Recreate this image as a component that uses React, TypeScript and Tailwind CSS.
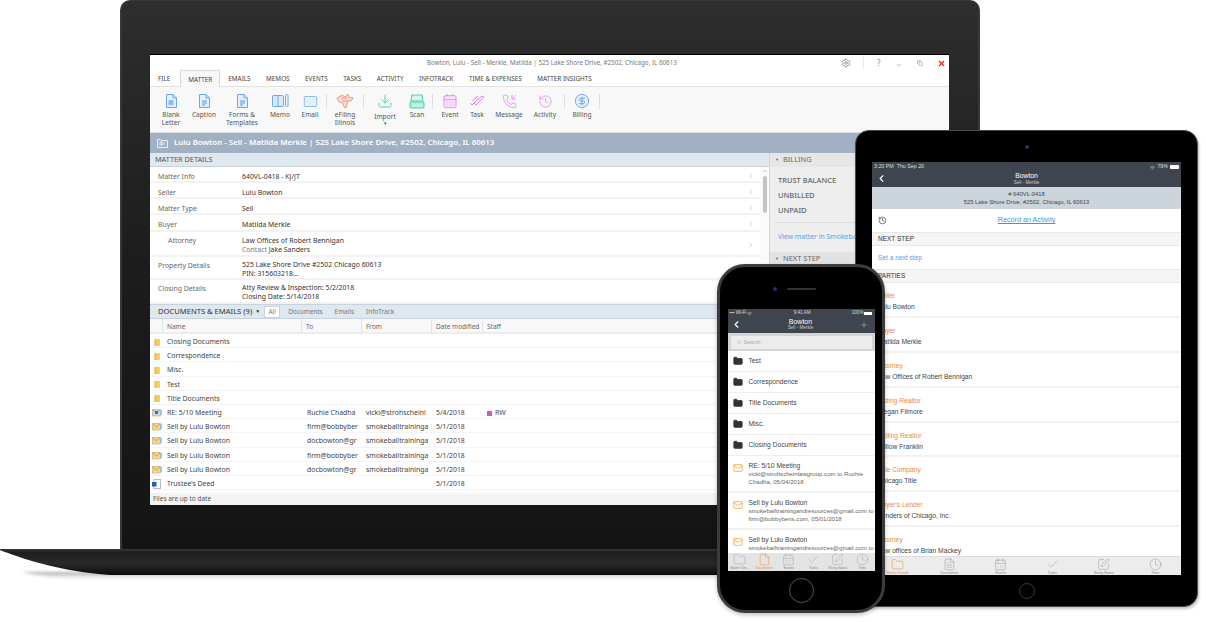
import {
  CalendarDays,
  Check,
  ChevronLeft,
  ChevronRight,
  ChevronUp,
  CircleDollarSign,
  Clock,
  Copy,
  Download,
  File,
  FileText,
  Folder,
  History,
  Mail,
  Minus,
  PhoneIncoming,
  Plus,
  Search,
  Settings,
  SquarePen,
  Wifi,
  X,
} from 'lucide-react'

const win = "font-['Noto_Sans',sans-serif]"
const ios = "font-['Liberation_Sans',sans-serif]"

const tabs = ['FILE', 'MATTER', 'EMAILS', 'MEMOS', 'EVENTS', 'TASKS', 'ACTIVITY', 'INFOTRACK', 'TIME & EXPENSES', 'MATTER INSIGHTS']

function DocIcon({ lines = 2 }: { lines?: number }) {
  return (
    <svg width="15" height="16" viewBox="0 0 15 16" fill="none" stroke="#6aa9e9" strokeWidth="1">
      <path d="M2.5 1.5h6.5l3.5 3.5v9.5h-10z" fill="#e4f0fc" />
      <path d="M9 1.5v3.5h3.5" />
      {lines > 1 && <path d="M5 8h5M5 10h5M5 12h3" stroke="#5b9ae0" />}
      {lines === 1 && <rect x="4.5" y="7" width="5" height="5" fill="#8dbdf0" stroke="none" />}
    </svg>
  )
}

function MemoIcon() {
  return (
    <svg width="17" height="14" viewBox="0 0 17 14" fill="none" stroke="#6aa9e9" strokeWidth="1">
      <rect x="0.5" y="1.5" width="11" height="11" rx="1" fill="#d9e9fa" />
      <path d="M6 2v10" />
      <rect x="13.5" y="0.5" width="2.5" height="12" rx="1" />
    </svg>
  )
}

function IllinoisIcon() {
  return (
    <svg width="18" height="16" viewBox="0 0 18 16" fill="#fbdcd3" stroke="#ee9a85" strokeWidth="1">
      <path d="M1 5l5-3 3 2 3-3 1 3 4 1-2 3-3 0-1 3-1 4-2-1-1-4-4-1z" />
      <path d="M5 5h7M6 8h6" fill="none" />
    </svg>
  )
}

function ScanIcon() {
  return (
    <svg width="16" height="15" viewBox="0 0 16 15" fill="none" stroke="#4fd0b2" strokeWidth="1.1">
      <path d="M3 1h10l1 6H2z" fill="#d8f6ee" />
      <rect x="1" y="8" width="14" height="6" rx="1.5" fill="#bdf0e2" />
    </svg>
  )
}

function TaskIcon() {
  return (
    <svg width="16" height="12" viewBox="0 0 16 12" fill="none" stroke="#d884e8" strokeWidth="1">
      <path d="M1 8l2 2 3-3M5 8l2 2 8-8-2-1-7 6M3 6l6-5" />
    </svg>
  )
}

function RibbonIcon({ name }: { name: string }) {
  const pink = '#d884e8'
  switch (name) {
    case 'Blank':
      return <DocIcon lines={1} />
    case 'Caption':
    case 'Forms':
      return <DocIcon />
    case 'Memo':
      return <MemoIcon />
    case 'Email':
      return <Mail size={15} color="#6aa9e9" fill="#e4f0fc" strokeWidth={1.2} />
    case 'eFiling':
      return <IllinoisIcon />
    case 'Import':
      return <Download size={16} color="#4fd0b2" strokeWidth={1.4} />
    case 'Scan':
      return <ScanIcon />
    case 'Event':
      return <CalendarDays size={16} color={pink} fill="#f6e2fa" strokeWidth={1.2} />
    case 'Task':
      return <TaskIcon />
    case 'Message':
      return <PhoneIncoming size={15} color={pink} strokeWidth={1.2} />
    case 'Activity':
      return <History size={15} color={pink} strokeWidth={1.2} />
    default:
      return <CircleDollarSign size={16} color="#5b9ae0" fill="#e4f0fc" strokeWidth={1.2} />
  }
}

const ribbon = [
  { id: 'Blank', w: 'w-[32px]', label: ['Blank', 'Letter'] },
  { id: 'Caption', w: 'w-[34px]', label: ['Caption'] },
  { id: 'Forms', w: 'w-[42px]', label: ['Forms &', 'Templates'] },
  { id: 'Memo', w: 'w-[34px]', label: ['Memo'] },
  { id: 'Email', w: 'w-[26px]', label: ['Email'] },
  { id: 'sep', w: 'ml-[3px]', label: [] },
  { id: 'eFiling', w: 'w-[36px]', label: ['eFiling', 'Illinois'] },
  { id: 'sep', w: '', label: [] },
  { id: 'Import', w: 'w-[42px]', label: ['Import'] },
  { id: 'Scan', w: 'w-[22px]', label: ['Scan'] },
  { id: 'sep', w: 'ml-[4px]', label: [] },
  { id: 'Event', w: 'w-[34px]', label: ['Event'] },
  { id: 'Task', w: 'w-[20px]', label: ['Task'] },
  { id: 'Message', w: 'w-[44px]', label: ['Message'] },
  { id: 'Activity', w: 'w-[28px]', label: ['Activity'] },
  { id: 'sep', w: 'ml-[5px]', label: [] },
  { id: 'Billing', w: 'w-[34px]', label: ['Billing'] },
  { id: 'sep', w: '', label: [] },
]

const details = [
  { k: 'Matter Info', v: ['640VL-0418 - KJ/JT'], h: 'h-[16px] pt-[4.5px]', arrow: true },
  { k: 'Seller', v: ['Lulu Bowton'], h: 'h-[16px] pt-[4.5px]', arrow: true },
  { k: 'Matter Type', v: ['Sell'], h: 'h-[16px] pt-[4.5px]', arrow: true },
  { k: 'Buyer', v: ['Matilda Merkle'], h: 'h-[17px] pt-[4.5px]', arrow: true },
  { k: 'Attorney', v: ['Law Offices of Robert Bennigan', 'Contact Jake Sanders'], h: 'h-[25px] pt-[3.5px]', arrow: true, sub: true },
  { k: 'Property Details', v: ['525 Lake Shore Drive #2502 Chicago 60613', 'PIN: 315603218...'], h: 'h-[23px] pt-[2.5px]', low: true },
  { k: 'Closing Details', v: ['Atty Review & Inspection: 5/2/2018', 'Closing Date: 5/14/2018'], h: 'h-[24px] pt-[2.5px]', low: true },
]

type Kind = 'folder' | 'reply' | 'mail' | 'word'

const docs: { icon: Kind; name: string; to?: string; from?: string; date?: string; staff?: string }[] = [
  { icon: 'folder', name: 'Closing Documents' },
  { icon: 'folder', name: 'Correspondence' },
  { icon: 'folder', name: 'Misc.' },
  { icon: 'folder', name: 'Test' },
  { icon: 'folder', name: 'Title Documents' },
  { icon: 'reply', name: 'RE: 5/10 Meeting', to: 'Ruchie Chadha', from: 'vicki@strohscheinl', date: '5/4/2018', staff: 'RW' },
  { icon: 'mail', name: 'Sell by Lulu Bowton', to: 'firm@bobbyber', from: 'smokeballtraininga', date: '5/1/2018' },
  { icon: 'mail', name: 'Sell by Lulu Bowton', to: 'docbowton@gr', from: 'smokeballtraininga', date: '5/1/2018' },
  { icon: 'mail', name: 'Sell by Lulu Bowton', to: 'firm@bobbyber', from: 'smokeballtraininga', date: '5/1/2018' },
  { icon: 'mail', name: 'Sell by Lulu Bowton', to: 'docbowton@gr', from: 'smokeballtraininga', date: '5/1/2018' },
  { icon: 'word', name: "Trustee's Deed", date: '5/1/2018' },
]

function DocRowIcon({ kind }: { kind: Kind }) {
  if (kind === 'folder') {
    return (
      <svg width="6" height="7" viewBox="0 0 6 7">
        <rect width="6" height="7" fill="#f7cf6b" />
        <rect x="1.5" width="1" height="7" fill="#e9b648" />
      </svg>
    )
  }
  if (kind === 'word') {
    return (
      <svg width="9" height="10" viewBox="0 0 9 10">
        <rect x="2" y="0.5" width="6.5" height="9" fill="#fff" stroke="#b5bcc6" />
        <rect x="0" y="3" width="4.5" height="4.5" fill="#1f5fb0" />
      </svg>
    )
  }
  return (
    <svg width="10" height="8" viewBox="0 0 10 8">
      <rect x="0.5" y="0.5" width="8" height="6.5" fill={kind === 'reply' ? '#c9d8ea' : '#f5d48c'} stroke="#c8a45c" strokeWidth="0.6" />
      <path d="M1 1l3.5 3L8 1" fill="none" stroke="#a8843e" strokeWidth="0.6" />
      <rect x="8" y="1" width="2" height="5" fill="#9cc0e8" />
      {kind === 'reply' && <rect x="3" y="2" width="3" height="3" fill="#3e6fb4" />}
    </svg>
  )
}

function LaptopScreen() {
  return (
    <div className={`${win} flex h-[451px] w-[799px] flex-col overflow-hidden border-t border-black bg-white text-[#444]`}>
      <div className="flex h-[15px] shrink-0 items-center pl-[277px] text-[6.25px] text-[#777]">
        <span className="w-[491px] whitespace-nowrap">
          Bowton, Lulu - Sell - Merkle, Matilda | 525 Lake Shore Drive, #2502, Chicago, IL 60613
        </span>
      </div>

      <div className="flex h-[17px] shrink-0 items-end border-b border-[#e2e2e2] pl-[8px] text-[6.35px] text-[#3f3f3f]">
        {tabs.map((t) =>
          t === 'MATTER' ? (
            <span key={t} className="-mb-px mr-[8px] flex h-[17px] w-[40px] items-center justify-center border border-b-0 border-[#d8d8d8] bg-[#f8f8f8] pt-[1px]">
              {t}
            </span>
          ) : (
            <span key={t} className={`${t === 'FILE' ? 'mr-[10px]' : 'mr-[15.5px]'} flex h-[16px] items-center whitespace-nowrap pt-[1px]`}>
              {t}
            </span>
          ),
        )}
      </div>

      <div className="flex h-[45px] shrink-0 items-start bg-[#f8f8f8] pl-[5px] pt-[6px] text-[6.6px] leading-[7.5px] text-[#555]">
        {ribbon.map((r, i) =>
          r.id === 'sep' ? (
            <div key={i} className={`${r.w} mt-[1px] h-[15px] w-px bg-[#dedede]`} />
          ) : (
            <div key={i} className={`${r.w} flex shrink-0 flex-col items-center whitespace-nowrap text-center`}>
              <div className="flex h-[16px] items-center">
                <RibbonIcon name={r.id} />
              </div>
              <div className={r.id === 'Import' ? 'mt-[4px]' : 'mt-[2px]'}>
                {r.label.map((l) => (
                  <div key={l}>{l}</div>
                ))}
                {r.id === 'Import' && <div className="text-[5px] leading-[5px]">▾</div>}
              </div>
            </div>
          ),
        )}
      </div>

      <div className="flex h-[21px] shrink-0 items-center gap-[5px] border-t border-[#dcdcdc] bg-[#a0b1c3] pl-[7px] text-[7.9px] font-semibold text-white">
        <svg width="12" height="10" viewBox="0 0 12 10" fill="none" stroke="#fff" strokeWidth="0.8">
          <path d="M0.5 1.5h3l1 1h6v7h-10z" />
          <rect x="3" y="4" width="2" height="3" />
          <path d="M7 4v3" />
        </svg>
        <span className="whitespace-nowrap">Lulu Bowton - Sell - Matilda Merkle | 525 Lake Shore Drive, #2502, Chicago, IL 60613</span>
      </div>

      <div className="flex h-[151px] shrink-0">
        <div className="flex w-[619px] flex-col">
          <div className="flex h-[14px] shrink-0 items-center border-b border-[#c9d3de] bg-[#dfe7ef] pl-[5px] text-[7.3px] text-[#555]">MATTER DETAILS</div>
          <div className="flex min-h-0 flex-1">
            <div className="flex w-[610px] flex-col text-[6.9px] leading-[9px]">
              {details.map((d) => (
                <div key={d.k} className={`${d.h} flex items-start border-b-2 border-[#f3f3f3] pr-[5px]`}>
                  <div className={`${d.sub ? 'pl-[18px]' : 'pl-[8px]'} ${d.low ? 'mt-[1px]' : ''} w-[92px] shrink-0 text-[#666]`}>{d.k}</div>
                  <div className="flex-1 whitespace-nowrap text-[#333]">
                    {d.v.map((l) =>
                      l.startsWith('Contact') ? (
                        <div key={l}>
                          <span className="text-[#777]">Contact</span> Jake Sanders
                        </div>
                      ) : (
                        <div key={l}>{l}</div>
                      ),
                    )}
                  </div>
                  {d.arrow && <ChevronRight size={8} color="#999" strokeWidth={1.2} className={d.sub ? 'mt-[5px]' : ''} />}
                </div>
              ))}
            </div>
            <div className="flex w-[9px] flex-col items-center bg-[#fafafa] pt-[1px]">
              <ChevronUp size={6} color="#999" />
              <div className="mt-[2px] h-[37px] w-[4px] rounded-full bg-[#c4c4c4]" />
            </div>
          </div>
        </div>

        <div className="flex flex-1 flex-col border-l border-[#d5d5d5] bg-[#eeeeee] text-[#666]">
          <div className="flex h-[14px] shrink-0 items-center gap-[4px] bg-[#e6e6e6] pl-[5px] text-[7.4px]">
            <span className="text-[4px]">▼</span> BILLING
          </div>
          <div className="flex flex-col gap-[6px] px-[8px] pt-[9px] text-[7.5px] font-medium leading-[9px]">
            <div>TRUST BALANCE</div>
            <div>UNBILLED</div>
            <div>UNPAID</div>
          </div>
          <div className="ml-[4px] mt-[7px] h-px bg-[#dcdcdc]" />
          <div className="pl-[8px] pt-[9px] text-[6.9px] leading-[9px] whitespace-nowrap text-[#5f9fe6]">View matter in Smokeball</div>
          <div className="mt-[11px] flex h-[13px] items-center gap-[4px] bg-[#e2e2e2] pl-[5px] text-[7.5px]">
            <span className="text-[4px]">▼</span> NEXT STEP
          </div>
        </div>
      </div>

      <div className="flex h-[15px] shrink-0 items-center border-y border-[#c9d3de] bg-[#dfe7ef] pl-[8px] pt-[1px] text-[6.4px] text-[#777]">
        <span className="text-[7.6px] text-[#333]">DOCUMENTS &amp; EMAILS (9)</span>
        <span className="ml-[3px] text-[5px] text-[#333]">▼</span>
        <span className="ml-[4px] flex h-[12px] w-[16px] items-center justify-center border border-[#c9d3de] bg-white">All</span>
        <span className="ml-[8px]">Documents</span>
        <span className="ml-[12px]">Emails</span>
        <span className="ml-[12px]">InfoTrack</span>
      </div>

      <div className="grid h-[15px] shrink-0 grid-cols-[13px_139px_60px_70px_51px_1fr] border-b-2 border-[#ededed] text-[6.5px] leading-[15px] text-[#666]">
        {['', 'Name', 'To', 'From', 'Date modified', 'Staff'].map((c) => (
          <div key={c || 'icon'} className="overflow-hidden border-r border-[#e2e2e2] bg-[#f8f8f8] pl-[4px] whitespace-nowrap">
            {c}
          </div>
        ))}
      </div>

      <div className="flex min-h-0 flex-1 flex-col text-[6.9px] text-[#444]">
        {docs.map((d, i) => (
          <div key={i} className="grid h-[14.2px] shrink-0 grid-cols-[13px_139px_60px_70px_51px_1fr] items-center border-b border-[#f4f4f4] pt-[3px]">
            <div className="flex justify-center">
              <DocRowIcon kind={d.icon} />
            </div>
            <div className="pl-[4px]">{d.name}</div>
            <div className="whitespace-nowrap pl-[5px]">{d.to}</div>
            <div className="whitespace-nowrap pl-[4px]">{d.from}</div>
            <div className="pl-[4px]">{d.date}</div>
            <div className="flex items-center gap-[3px] pl-[4px]">
              {d.staff && <span className="h-[5px] w-[5px] bg-[#c85fb5]" />}
              {d.staff}
            </div>
          </div>
        ))}
      </div>
      <div className="flex h-[12px] shrink-0 items-center bg-[#f3f3f3] pl-[3px] text-[6.5px] text-[#555]">Files are up to date</div>
    </div>
  )
}

function WindowButtons() {
  return (
    <div className="absolute right-[3px] top-[3px] flex items-center">
      <Settings size={10} color="#888" />
      <div className="ml-[12px] h-[12px] w-px bg-[#e8e8e8]" />
      <span className="ml-[13px] text-[8px] leading-none text-[#888]">?</span>
      <Minus size={6} color="#888" className="ml-[15px] mt-[3px]" />
      <Copy size={6} color="#888" className="ml-[15px]" />
      <X size={9} color="#e02020" strokeWidth={3} className="ml-[14.5px]" />
    </div>
  )
}

const parties = [
  ['Seller', 'Lulu Bowton'],
  ['Buyer', 'Matilda Merkle'],
  ['Attorney', 'Law Offices of Robert Bennigan'],
  ['Listing Realtor', 'Megan Filmore'],
  ['Selling Realtor', 'Willow Franklin'],
  ['Title Company', 'Chicago Title'],
  ["Buyer's Lender", 'Lenders of Chicago, Inc.'],
  ['Attorney', 'Law offices of Brian Mackey'],
]

function Tablet() {
  const tabItems = [
    { l: 'Matter Details', I: Folder, on: true },
    { l: 'Documents', I: FileText },
    { l: 'Events', I: CalendarDays },
    { l: 'Tasks', I: Check },
    { l: 'Sticky Notes', I: SquarePen },
    { l: 'Time', I: Clock },
  ]
  return (
    <div className="absolute left-[855px] top-[130px] flex h-[477px] w-[343px] flex-col items-center rounded-[14px] border border-[#4a4a4a] bg-black shadow-[1px_2px_3px_rgba(0,0,0,0.25)]">
      <div className="flex h-[31px] shrink-0 items-center justify-center">
        <span className="h-[4px] w-[4px] rounded-full bg-[#27355c]" />
      </div>
      <div className={`${ios} flex h-[413px] w-[309px] shrink-0 flex-col overflow-hidden bg-white text-[#333]`}>
        <div className="flex h-[25px] shrink-0 flex-col bg-[#3e454e] text-white">
          <div className="flex h-[8px] items-center justify-between px-[2px] pt-[2px] text-[5.3px] text-[#ddd]">
            <span>3:20 PM&nbsp;&nbsp;Thu Sep 20</span>
            <span className="flex items-center gap-[2px]">
              <Wifi size={5} /> 79%
              <span className="h-[4px] w-[9px] rounded-[1px] bg-white" />
            </span>
          </div>
          <div className="flex flex-1 items-center">
            <ChevronLeft size={11} strokeWidth={2.5} className="ml-[4px]" />
            <div className="-ml-[15px] flex-1 pt-[1px] text-center leading-none">
              <div className="text-[6.8px]">Bowton</div>
              <div className="mt-px text-[4.6px] text-[#ccc]">Sell - Merkle</div>
            </div>
          </div>
        </div>
        <div className="flex h-[22px] shrink-0 flex-col items-center justify-center bg-[#ccd4dc] text-[5.8px] leading-[8px] text-[#444]">
          <div># 640VL-0418</div>
          <div>525 Lake Shore Drive, #2502, Chicago, IL 60613</div>
        </div>
        <div className="flex h-[23px] shrink-0 items-center pl-[6px]">
          <History size={9} color="#555" />
          <span className="flex-1 pr-[15px] text-center text-[7.2px] text-[#4a90e2] underline">Record an Activity</span>
        </div>
        <div className="flex h-[14px] shrink-0 items-center border-y border-[#e8e8e8] bg-[#f5f5f5] pl-[6px] text-[6.5px] text-[#333]">NEXT STEP</div>
        <div className="flex h-[23px] shrink-0 items-center pl-[6px] text-[6.6px] text-[#5a9be8]">Set a next step</div>
        <div className="flex h-[14px] shrink-0 items-center border-y border-[#e8e8e8] bg-[#f5f5f5] pl-[6px] text-[6.5px] text-[#333]">PARTIES</div>
        <div className="min-h-0 flex-1 overflow-hidden">
          {parties.map(([k, v], i) => (
            <div key={i} className="flex h-[34.9px] flex-col justify-center gap-[3px] border-b-2 border-[#f2f2f2] pl-[6px] pt-[4px] text-[6.7px] leading-[8px]">
              <span className="text-[#e98a3f]">{k}</span>
              <span className="text-[#444]">{v}</span>
            </div>
          ))}
        </div>
        <div className="flex h-[19px] shrink-0 border-t border-[#ddd] bg-[#ececec]">
          {tabItems.map(({ l, I, on }) => (
            <div key={l} className={`flex flex-1 flex-col items-center pt-[1px] text-[3.6px] leading-[4px] ${on ? 'text-[#e98a3f]' : 'text-[#888]'}`}>
              <I size={13} strokeWidth={1} color={on ? '#e98a3f' : '#999'} />
              <span className="whitespace-nowrap">{l}</span>
            </div>
          ))}
        </div>
      </div>
      <div className="flex flex-1 items-center justify-center">
        <span className="h-[16px] w-[16px] rounded-full border border-[#3a3a3a]" />
      </div>
    </div>
  )
}

const phoneFolders = ['Test', 'Correspondence', 'Title Documents', 'Misc.', 'Closing Documents']
const phoneMails = [
  ['RE: 5/10 Meeting', 'vicki@strohscheinlawgroup.com to Ruchie', 'Chadha, 05/04/2018'],
  ['Sell by Lulu Bowton', 'smokeballtrainingandresources@gmail.com to', 'firm@bobbybens.com, 05/01/2018'],
  ['Sell by Lulu Bowton', 'smokeballtrainingandresources@gmail.com to'],
]

function Phone() {
  const tabItems = [
    { l: 'Matter Det...', I: Folder },
    { l: 'Documents', I: File, on: true },
    { l: 'Events', I: CalendarDays },
    { l: 'Tasks', I: Check },
    { l: 'Sticky Notes', I: SquarePen },
    { l: 'Time', I: Clock },
  ]
  return (
    <div className="absolute left-[717px] top-[264px] flex h-[349px] w-[168px] flex-col items-center rounded-[28px] border-[3px] border-[#3c3c3c] bg-black shadow-[0_2px_4px_rgba(0,0,0,0.25)]">
      <div className="flex h-[42px] w-full shrink-0 items-center justify-center gap-[10px] pr-[13px] pt-[2px]">
        <span className="h-[4px] w-[4px] rounded-full bg-[#1f3566]" />
        <span className="h-[2px] w-[29px] rounded-full bg-[#333]" />
      </div>
      <div className={`${ios} flex h-[262px] w-[147px] shrink-0 flex-col overflow-hidden bg-white text-[#444]`}>
        <div className="flex h-[24px] shrink-0 flex-col bg-[#3e454e] text-white">
          <div className="flex h-[7px] items-center justify-between px-[2px] pt-[2px] text-[4.6px] text-[#ddd]">
            <span className="flex items-center gap-[1px]">
              ▪▪▪ Wi-Fi <Wifi size={5} />
            </span>
            <span>9:41 AM</span>
            <span className="flex items-center gap-[1px]">
              100%
              <span className="h-[3px] w-[8px] bg-white" />
            </span>
          </div>
          <div className="flex flex-1 items-center justify-between pl-[3px] pr-[7px]">
            <ChevronLeft size={11} strokeWidth={2.5} />
            <div className="text-center leading-none">
              <div className="text-[7px]">Bowton</div>
              <div className="mt-px text-[4.6px] text-[#ccc]">Sell - Merkle</div>
            </div>
            <Plus size={8} color="#aaa" />
          </div>
        </div>
        <div className="flex h-[18px] shrink-0 items-center bg-[#d4d4d4] px-[3px]">
          <div className="flex h-[13px] flex-1 items-center gap-[3px] rounded-[1px] bg-[#ececec] pl-[6px] text-[5.4px] text-[#aaa]">
            <Search size={4} />
            Search
          </div>
        </div>
        {phoneFolders.map((f) => (
          <div key={f} className="flex h-[21px] shrink-0 items-center gap-[6px] border-b border-[#eee] pl-[5px] text-[6.7px]">
            <Folder size={10} fill="#333" color="#333" />
            {f}
          </div>
        ))}
        <div className="min-h-0 flex-1 overflow-hidden">
          {phoneMails.map(([t, a, b], i) => (
            <div key={i} className="flex h-[37px] items-start gap-[6px] border-b-2 border-[#f0f0f0] pl-[5px] pt-[6px]">
              <Mail size={10} color="#f0a940" className="mt-[1px] shrink-0" />
              <div className="whitespace-nowrap text-[6.1px] leading-[8px] text-[#666]">
                <div className="text-[6.7px] text-[#444]">{t}</div>
                <div>{a}</div>
                {b && <div>{b}</div>}
              </div>
            </div>
          ))}
        </div>
        <div className="flex h-[18px] shrink-0 bg-[#e4e4e4]">
          {tabItems.map(({ l, I, on }) => (
            <div key={l} className={`flex flex-1 flex-col items-center text-[3.4px] leading-[4px] ${on ? 'text-[#e98a3f]' : 'text-[#888]'}`}>
              <I size={13} strokeWidth={1} color={on ? '#e98a3f' : '#aaa'} />
              <span className="whitespace-nowrap">{l}</span>
            </div>
          ))}
        </div>
      </div>
      <div className="flex flex-1 items-center justify-center">
        <span className="h-[25px] w-[25px] rounded-full border border-[#555]" />
      </div>
    </div>
  )
}

export default function App() {
  return (
    <div className="relative h-[622px] w-[1206px] overflow-hidden bg-white">
      <svg className="absolute left-0 top-[545px]" width="1010" height="42" viewBox="0 0 1010 42">
        <defs>
          <linearGradient id="base" x1="0" y1="0" x2="0" y2="1">
            <stop offset="0" stopColor="#3a3a3a" />
            <stop offset="0.12" stopColor="#1e1e1e" />
            <stop offset="0.55" stopColor="#2a2a2a" />
            <stop offset="1" stopColor="#0c0c0c" />
          </linearGradient>
          <linearGradient id="shade" x1="0" y1="0" x2="0" y2="1">
            <stop offset="0" stopColor="#777" stopOpacity="0.7" />
            <stop offset="1" stopColor="#fff" stopOpacity="0" />
          </linearGradient>
        </defs>
        <path d="M22 27H1000V36H70z" fill="url(#shade)" className="blur-[1.5px]" />
        <path d="M1 4C-1 4 -1 5 2 6C30 16 60 26 110 30H1000V4z" fill="url(#base)" />
      </svg>

      <div className="absolute left-[120px] top-0 h-[549px] w-[860px] rounded-t-[10px] border-x-2 border-t border-[#383838] bg-gradient-to-b from-[#2e2e2e] via-[#1c1c1c] to-[#141414] pl-[28px] pt-[53px]">
        <div className="relative w-[799px]">
          <LaptopScreen />
          <WindowButtons />
        </div>
      </div>

      <Tablet />
      <Phone />
    </div>
  )
}
